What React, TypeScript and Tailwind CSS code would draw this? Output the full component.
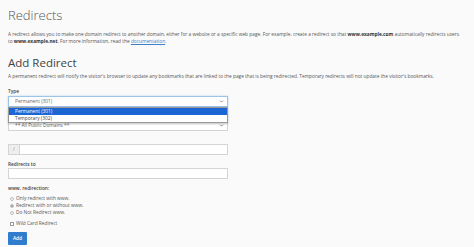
import { ChevronDown } from 'lucide-react';

const font = { fontFamily: '"Open Sans", "Liberation Sans", sans-serif' };

function Select({ value, focused }: { value: string; focused?: boolean }) {
  return (
    <div
      className={`flex h-[11px] w-[220px] items-center justify-between bg-white pl-[6px] pr-[3px] text-[4.8px] text-[#666] border ${
        focused ? 'border-[#9ec3e8] shadow-[0_0_2px_#b9d6f2]' : 'border-[#d4d4d4]'
      }`}
    >
      <span>{value}</span>
      <ChevronDown size={5} strokeWidth={3} className="text-[#555]" />
    </div>
  );
}

function Radio({ label, checked }: { label: string; checked?: boolean }) {
  return (
    <div className="flex h-[7px] items-center gap-[2px] pl-[2px]">
      <span className="flex h-[4px] w-[4px] items-center justify-center rounded-full border-[0.5px] border-[#bbb] bg-white">
        {checked && <span className="h-[2px] w-[2px] rounded-full bg-[#999]" />}
      </span>
      <span>{label}</span>
    </div>
  );
}

export default function App() {
  return (
    <div className="min-h-[247px] w-[474px] bg-[#fafafa] px-[8px] pt-[5px] text-[#444]" style={font}>
      <h1 className="text-[13px] font-light leading-[20px] text-[#555]">Redirects</h1>
      <p className="mt-[6px] text-[4.8px] leading-[7px] text-[#555]">
        A redirect allows you to make one domain redirect to another domain, either for a website or a specific web page. For
        example, create a redirect so that <b className="text-[#333]">www.example.com</b> automatically redirects users
        <br />
        to <b className="text-[#333]">www.example.net</b>. For more information, read the{' '}
        <span className="text-[#3b7fc4] underline">documentation</span>.
      </p>

      <h2 className="mt-[9px] text-[11.5px] leading-[17px] text-[#444]">Add Redirect</h2>
      <p className="mt-[2px] text-[4.8px] leading-[7px] text-[#555]">
        A permanent redirect will notify the visitor's browser to update any bookmarks that are linked to the page that is
        being redirected. Temporary redirects will not update the visitor's bookmarks.
      </p>

      <div className="mt-[8px] text-[4.8px]">
        <div className="font-semibold leading-[7px] text-[#444]">Type</div>
        <div className="relative mt-[1px]">
          <Select value="Permanent (301)" focused />
          <div className="absolute left-0 top-[11px] z-10 w-[220px] border-[0.5px] border-[#999] bg-white shadow-[0_1px_2px_rgba(0,0,0,0.25)]">
            <div className="flex h-[7px] items-center bg-[#1b66d2] pl-[6px] text-white">Permanent (301)</div>
            <div className="flex h-[7px] items-center pl-[6px] text-[#444]">Temporary (302)</div>
          </div>
        </div>

        <div className="mt-[5px] h-[8px]" />
        <Select value="** All Public Domains **" />

        <div className="mt-[13px] flex h-[11px] w-[220px] border border-[#d4d4d4] bg-white">
          <span className="flex w-[11px] items-center justify-center border-r border-[#d4d4d4] bg-[#eee] text-[#888]">/</span>
        </div>

        <div className="mt-[6px] font-semibold leading-[7px] text-[#444]">Redirects to</div>
        <div className="h-[11px] w-[220px] border border-[#d4d4d4] bg-white" />

        <div className="mt-[6px] font-semibold leading-[7px] text-[#444]">www. redirection:</div>
        <div className="mt-[3px] text-[#555]">
          <Radio label="Only redirect with www." />
          <Radio label="Redirect with or without www." checked />
          <Radio label="Do Not Redirect www." />
        </div>

        <div className="mt-[4px] flex h-[7px] items-center gap-[2px] pl-[2px] text-[#555]">
          <span className="h-[4px] w-[4px] border-[0.5px] border-[#999] bg-white" />
          <span>Wild Card Redirect</span>
        </div>

        <button className="mt-[5px] h-[13px] w-[19px] rounded-[1px] bg-[#2f7dcc] text-[4.8px] font-semibold text-white">
          Add
        </button>
      </div>
    </div>
  );
}
